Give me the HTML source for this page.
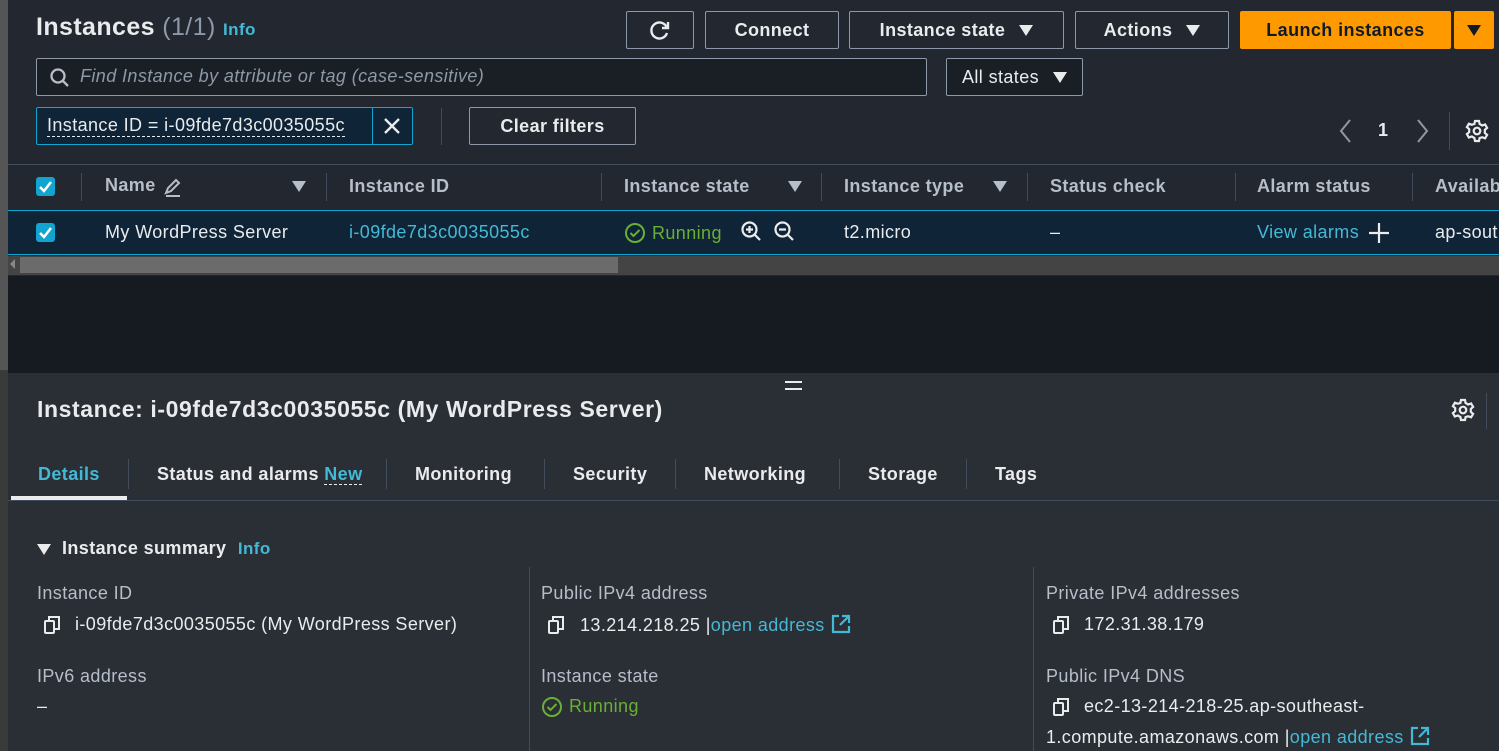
<!DOCTYPE html>
<html><head><meta charset="utf-8"><style>
*{box-sizing:border-box;margin:0;padding:0}
body{width:1499px;height:751px;overflow:hidden;background:#232730;font-family:"Liberation Sans",sans-serif;color:#d1d5db;position:relative;font-size:18px;letter-spacing:0.4px}
.a{position:absolute;white-space:nowrap}
.btn{position:absolute;border:1px solid #8d99a8;border-radius:2px;color:#e9ebed;font-weight:bold;display:flex;align-items:center;justify-content:center;background:#232730}
.tri{display:inline-block;width:0;height:0;border-left:7px solid transparent;border-right:7px solid transparent;border-top:11px solid #e9ebed;margin-left:14px}
.link{color:#44b9d6}
.hd{color:#b6bec9;font-weight:bold}
.sep{position:absolute;width:1px;background:#414d5c}
.lbl{color:#b6bec9}
.val{color:#e9ebed}
.cb{position:absolute;width:19px;height:19px;background:#12a4d1;border-radius:3px}
.ext{display:inline-block;vertical-align:-3px;margin-left:6px}
</style></head><body>
<div class="a" style="left:0;top:0;width:8px;height:751px;background:#3a3a3a"></div>
<div class="a" style="left:0;top:0;width:8px;height:370px;background:#555"></div>

<div class="a" style="left:36px;top:13px;font-size:25px;font-weight:bold;color:#e9ebed">Instances <span style="font-weight:normal;color:#8d99a8">(1/1)</span> <span class="link" style="font-size:17px">Info</span></div>

<div class="btn" style="left:626px;top:11px;width:68px;height:38px"><svg width="24" height="24" viewBox="0 0 24 24" fill="none" stroke="#e9ebed" stroke-width="2.4"><path d="M19 10a8 8 0 1 0 0 5"/><path d="M20 4v6h-6" /></svg></div>
<div class="btn" style="left:705px;top:11px;width:134px;height:38px">Connect</div>
<div class="btn" style="left:849px;top:11px;width:215px;height:38px">Instance state<span class="tri"></span></div>
<div class="btn" style="left:1075px;top:11px;width:154px;height:38px">Actions<span class="tri"></span></div>
<div class="btn" style="left:1240px;top:11px;width:211px;height:38px;background:#ff9900;border-color:#ff9900;color:#0f1b2a">Launch instances</div>
<div class="btn" style="left:1454px;top:11px;width:40px;height:38px;background:#ff9900;border-color:#ff9900"><span class="tri" style="margin:0;border-top-color:#0f1b2a"></span></div>

<div class="a" style="left:36px;top:58px;width:891px;height:38px;border:1px solid #8d99a8;border-radius:2px;background:#1a1e25"></div>
<svg class="a" style="left:49px;top:67px" width="22" height="22" viewBox="0 0 22 22" fill="none" stroke="#b6bec9" stroke-width="2.3"><circle cx="9" cy="9" r="6.5"/><path d="M14 14l5 5"/></svg>
<div class="a" style="left:80px;top:66px;font-style:italic;color:#8d99a8">Find Instance by attribute or tag (case-sensitive)</div>
<div class="btn" style="left:946px;top:58px;width:137px;height:38px;font-weight:normal;background:#1a1e25">All states<span class="tri"></span></div>

<div class="a" style="left:36px;top:107px;width:377px;height:38px;border:1px solid #0ea5d3;border-radius:2px;background:#0f2437"></div>
<div class="a" style="left:372px;top:108px;width:1px;height:36px;background:#0ea5d3"></div>
<div class="a" style="left:47px;top:115px;color:#e9ebed;border-bottom:1px dashed #e9ebed;line-height:21px">Instance ID = i-09fde7d3c0035055c</div>
<svg class="a" style="left:382px;top:116px" width="20" height="20" viewBox="0 0 20 20" stroke="#e9ebed" stroke-width="2.4"><path d="M3 3l14 14M17 3L3 17"/></svg>
<div class="sep" style="left:441px;top:108px;height:37px"></div>
<div class="btn" style="left:469px;top:107px;width:167px;height:38px">Clear filters</div>

<svg class="a" style="left:1338px;top:118px" width="16" height="26" viewBox="0 0 16 26" fill="none" stroke="#8d99a8" stroke-width="2"><path d="M12 2L3 13l9 11"/></svg>
<div class="a" style="left:1378px;top:120px;font-weight:bold;color:#e9ebed">1</div>
<svg class="a" style="left:1414px;top:118px" width="16" height="26" viewBox="0 0 16 26" fill="none" stroke="#8d99a8" stroke-width="2"><path d="M4 2l9 11-9 11"/></svg>
<div class="sep" style="left:1449px;top:112px;height:38px"></div>
<svg class="a" style="left:1465px;top:119px" width="24" height="24" viewBox="0 0 24 24" fill="none" stroke="#e9ebed" stroke-width="2.2"><circle cx="12" cy="12" r="3.3"/><path d="M10 2h4l.6 3 2.6 1.5 2.9-1 2 3.4-2.3 2v3l2.3 2-2 3.4-2.9-1L14.6 19 14 22h-4l-.6-3-2.6-1.5-2.9 1-2-3.4 2.3-2v-3l-2.3-2 2-3.4 2.9 1L9.4 5z"/></svg>

<div class="a" style="left:8px;top:164px;width:1491px;height:1px;background:#414d5c"></div>
<div class="cb" style="left:36px;top:177px"></div>
<svg class="a" style="left:38px;top:179px" width="15" height="15" viewBox="0 0 15 15" fill="none" stroke="#fff" stroke-width="2.5"><path d="M2 8l4 4 7-9"/></svg>
<div class="sep" style="left:81px;top:173px;height:28px"></div>
<div class="a hd" style="left:105px;top:175px">Name</div>
<svg class="a" style="left:163px;top:177px" width="20" height="20" viewBox="0 0 20 20" fill="none" stroke="#b6bec9" stroke-width="2"><path d="M3 16l2-5 8-8 3 3-8 8zM3 19h14"/></svg>
<div class="a" style="left:292px;top:181px;width:0;height:0;border-left:7px solid transparent;border-right:7px solid transparent;border-top:11px solid #b6bec9"></div>
<div class="sep" style="left:326px;top:173px;height:28px"></div>
<div class="a hd" style="left:349px;top:176px">Instance ID</div>
<div class="sep" style="left:601px;top:173px;height:28px"></div>
<div class="a hd" style="left:624px;top:176px">Instance state</div>
<div class="a" style="left:788px;top:181px;width:0;height:0;border-left:7px solid transparent;border-right:7px solid transparent;border-top:11px solid #b6bec9"></div>
<div class="sep" style="left:821px;top:173px;height:28px"></div>
<div class="a hd" style="left:844px;top:176px">Instance type</div>
<div class="a" style="left:993px;top:181px;width:0;height:0;border-left:7px solid transparent;border-right:7px solid transparent;border-top:11px solid #b6bec9"></div>
<div class="sep" style="left:1027px;top:173px;height:28px"></div>
<div class="a hd" style="left:1050px;top:176px">Status check</div>
<div class="sep" style="left:1235px;top:173px;height:28px"></div>
<div class="a hd" style="left:1257px;top:176px">Alarm status</div>
<div class="sep" style="left:1412px;top:173px;height:28px"></div>
<div class="a hd" style="left:1435px;top:176px">Availab</div>

<div class="a" style="left:8px;top:210px;width:1491px;height:45px;background:#0f2437;border-top:1px solid #0ea5d3;border-bottom:1px solid #0ea5d3"></div>
<div class="cb" style="left:36px;top:223px"></div>
<svg class="a" style="left:38px;top:225px" width="15" height="15" viewBox="0 0 15 15" fill="none" stroke="#fff" stroke-width="2.5"><path d="M2 8l4 4 7-9"/></svg>
<div class="a val" style="left:105px;top:222px">My WordPress Server</div>
<div class="a link" style="left:349px;top:222px">i-09fde7d3c0035055c</div>
<svg class="a" style="left:624px;top:222px" width="22" height="22" viewBox="0 0 22 22" fill="none" stroke="#6aaf35" stroke-width="2"><circle cx="11" cy="11" r="9"/><path d="M6.5 11l3 3 6-6"/></svg>
<div class="a" style="left:652px;top:223px;color:#6aaf35">Running</div>
<svg class="a" style="left:740px;top:220px" width="22" height="22" viewBox="0 0 22 22" fill="none" stroke="#e9ebed" stroke-width="2.2"><circle cx="9.5" cy="9.5" r="7"/><path d="M15 15l5 5M6 9.5h7M9.5 6v7"/></svg>
<svg class="a" style="left:773px;top:220px" width="22" height="22" viewBox="0 0 22 22" fill="none" stroke="#e9ebed" stroke-width="2.2"><circle cx="9.5" cy="9.5" r="7"/><path d="M15 15l5 5M6 9.5h7"/></svg>
<div class="a val" style="left:844px;top:222px">t2.micro</div>
<div class="a val" style="left:1050px;top:222px">–</div>
<div class="a link" style="left:1257px;top:222px">View alarms</div>
<svg class="a" style="left:1368px;top:222px" width="22" height="22" viewBox="0 0 22 22" stroke="#e9ebed" stroke-width="2.2"><path d="M11 1v20M1 11h20"/></svg>
<div class="a val" style="left:1435px;top:222px">ap-sout</div>

<div class="a" style="left:8px;top:256px;width:1491px;height:19px;background:#444"></div>
<div class="a" style="left:20px;top:257px;width:598px;height:16px;background:#6b6b6b"></div>
<div class="a" style="left:10px;top:259px;width:0;height:0;border-top:5px solid transparent;border-bottom:5px solid transparent;border-right:5px solid #888"></div>

<div class="a" style="left:8px;top:276px;width:1491px;height:97px;background:#161a21"></div>
<div class="a" style="left:8px;top:373px;width:1491px;height:378px;background:#2a2e35"></div>
<div class="a" style="left:785px;top:381px;width:17px;height:2px;background:#e9ebed"></div>
<div class="a" style="left:785px;top:388px;width:17px;height:2px;background:#e9ebed"></div>

<div class="a" style="left:37px;top:396px;font-size:23px;font-weight:bold;color:#e9ebed;letter-spacing:0.6px">Instance: i-09fde7d3c0035055c (My WordPress Server)</div>
<svg class="a" style="left:1451px;top:398px" width="24" height="24" viewBox="0 0 24 24" fill="none" stroke="#e9ebed" stroke-width="2.2"><circle cx="12" cy="12" r="3.3"/><path d="M10 2h4l.6 3 2.6 1.5 2.9-1 2 3.4-2.3 2v3l2.3 2-2 3.4-2.9-1L14.6 19 14 22h-4l-.6-3-2.6-1.5-2.9 1-2-3.4 2.3-2v-3l-2.3-2 2-3.4 2.9 1L9.4 5z"/></svg>
<div class="a" style="left:1486px;top:393px;width:1px;height:36px;background:#414d5c"></div>

<div class="a" style="left:38px;top:464px;font-weight:bold;color:#44b9d6">Details</div>
<div class="a" style="left:11px;top:496px;width:116px;height:4px;background:#e9ebed"></div>
<div class="sep" style="left:128px;top:459px;height:30px"></div>
<div class="a" style="left:157px;top:464px;font-weight:bold;color:#e9ebed">Status and alarms <span style="color:#44b9d6;border-bottom:1px dashed #e9ebed">New</span></div>
<div class="sep" style="left:386px;top:459px;height:30px"></div>
<div class="a" style="left:415px;top:464px;font-weight:bold;color:#e9ebed">Monitoring</div>
<div class="sep" style="left:544px;top:459px;height:30px"></div>
<div class="a" style="left:573px;top:464px;font-weight:bold;color:#e9ebed">Security</div>
<div class="sep" style="left:675px;top:459px;height:30px"></div>
<div class="a" style="left:704px;top:464px;font-weight:bold;color:#e9ebed">Networking</div>
<div class="sep" style="left:839px;top:459px;height:30px"></div>
<div class="a" style="left:868px;top:464px;font-weight:bold;color:#e9ebed">Storage</div>
<div class="sep" style="left:966px;top:459px;height:30px"></div>
<div class="a" style="left:995px;top:464px;font-weight:bold;color:#e9ebed">Tags</div>
<div class="a" style="left:8px;top:500px;width:1491px;height:1px;background:#414d5c"></div>

<div class="a" style="left:37px;top:544px;width:0;height:0;border-left:7px solid transparent;border-right:7px solid transparent;border-top:11px solid #e9ebed"></div>
<div class="a" style="left:62px;top:538px;font-weight:bold;color:#e9ebed">Instance summary <span class="link" style="font-size:17px;margin-left:6px">Info</span></div>

<div class="sep" style="left:529px;top:567px;height:184px"></div>
<div class="sep" style="left:1033px;top:567px;height:184px"></div>

<svg style="display:none"><symbol id="cp" viewBox="0 0 20 20"><g fill="none" stroke="#e9ebed" stroke-width="2"><rect x="3" y="6" width="9" height="12" rx="1"/><path d="M7 6V2h10v12h-5"/></g></symbol></svg>

<div class="a lbl" style="left:37px;top:583px">Instance ID</div>
<svg class="a" style="left:42px;top:615px" width="20" height="20"><use href="#cp"/></svg>
<div class="a val" style="left:75px;top:614px">i-09fde7d3c0035055c (My WordPress Server)</div>
<div class="a lbl" style="left:37px;top:666px">IPv6 address</div>
<div class="a val" style="left:37px;top:696px">–</div>

<div class="a lbl" style="left:541px;top:583px">Public IPv4 address</div>
<svg class="a" style="left:546px;top:615px" width="20" height="20"><use href="#cp"/></svg>
<div class="a val" style="left:580px;top:614px">13.214.218.25 |<span class="link">open address</span><svg class="ext" width="20" height="20" viewBox="0 0 20 20" fill="none" stroke="#44b9d6" stroke-width="2.2"><path d="M8 2H2v16h16v-6M11 2h7v7M18 2l-9 9"/></svg></div>
<div class="a lbl" style="left:541px;top:666px">Instance state</div>
<svg class="a" style="left:541px;top:696px" width="22" height="22" viewBox="0 0 22 22" fill="none" stroke="#6aaf35" stroke-width="2"><circle cx="11" cy="11" r="9"/><path d="M6.5 11l3 3 6-6"/></svg>
<div class="a" style="left:569px;top:696px;color:#6aaf35">Running</div>

<div class="a lbl" style="left:1046px;top:583px">Private IPv4 addresses</div>
<svg class="a" style="left:1051px;top:615px" width="20" height="20"><use href="#cp"/></svg>
<div class="a val" style="left:1084px;top:614px">172.31.38.179</div>
<div class="a lbl" style="left:1046px;top:666px">Public IPv4 DNS</div>
<svg class="a" style="left:1051px;top:697px" width="20" height="20"><use href="#cp"/></svg>
<div class="a val" style="left:1084px;top:696px">ec2-13-214-218-25.ap-southeast-</div>
<div class="a val" style="left:1046px;top:726px">1.compute.amazonaws.com |<span class="link">open address</span><svg class="ext" width="20" height="20" viewBox="0 0 20 20" fill="none" stroke="#44b9d6" stroke-width="2.2"><path d="M8 2H2v16h16v-6M11 2h7v7M18 2l-9 9"/></svg></div>
</body></html>
